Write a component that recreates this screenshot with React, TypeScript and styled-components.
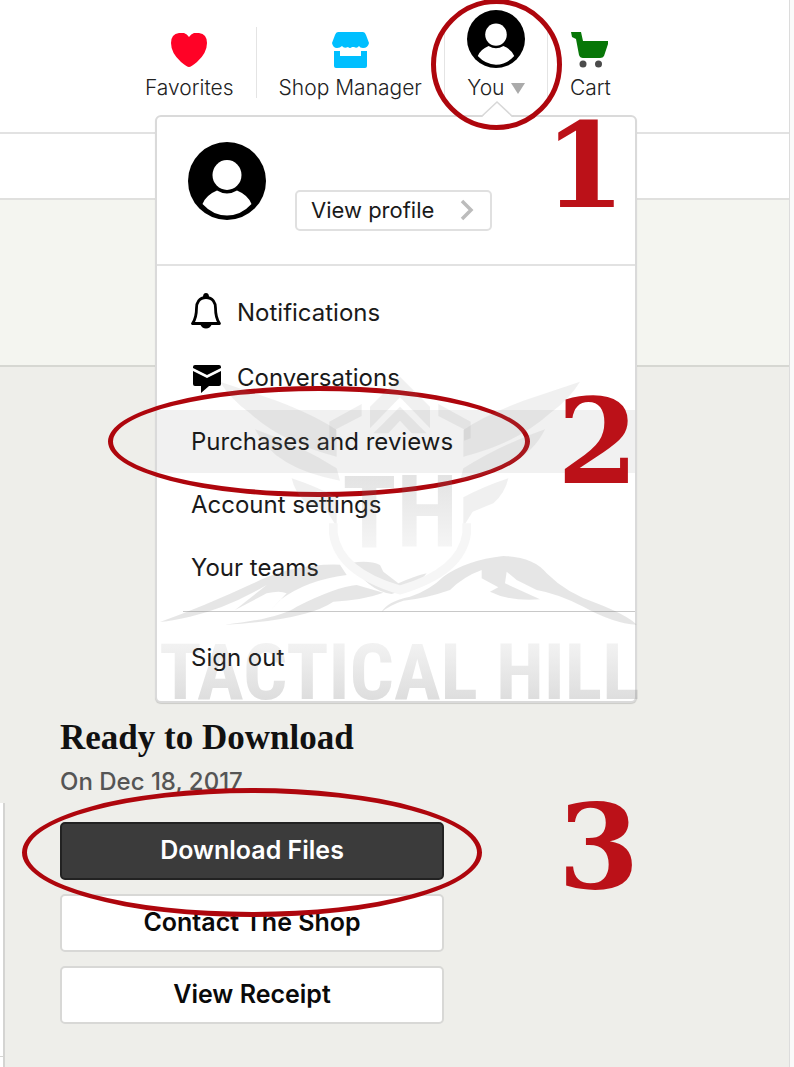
import React from "react";
import styled, { createGlobalStyle, css } from "styled-components";

const GlobalStyle = createGlobalStyle`
  * { box-sizing: border-box; }
  body {
    margin: 0;
    background: #fafafa;
    font-family: Inter, "Liberation Sans", sans-serif;
    color: #1a1a1a;
  }
  h2, p, ul { margin: 0; padding: 0; }
  a { color: inherit; text-decoration: none; }
`;

const Page = styled.div`
  position: relative;
  min-height: 100vh;
  margin-right: 4px;
  border-right: 1px solid #dcdcdc;
  display: flex;
  flex-direction: column;
  background: #fff;
  overflow: hidden;
`;

const Header = styled.header`
  height: 134px;
  border-bottom: 2px solid #e2e2e2;
  padding-top: 27px;
`;

const Nav = styled.nav`
  display: flex;
  padding-left: 123px;
`;

const NavItem = styled.a<{ $last?: boolean }>`
  display: flex;
  flex-direction: column;
  align-items: center;
  justify-content: flex-end;
  gap: 10px;
  height: 71px;
  padding: 0 22px;
  border-right: ${(p) => (p.$last ? "0" : "1px solid #e4e4e4")};
  font-size: 21px;
  font-weight: 300;
  line-height: 20px;
  color: #222;
  white-space: nowrap;
  svg { flex: none; }
`;

const NavLabel = styled.span`
  display: flex;
  align-items: center;
  gap: 6px;
`;

const SubBar = styled.div`
  height: 66px;
  border-bottom: 2px solid #e0e0de;
`;

const Banner = styled.div`
  height: 167px;
  background: #f4f5f0;
  border-bottom: 2px solid #d6d7d2;
`;

const Content = styled.main`
  flex: 1;
  display: flex;
  background: #eeeeea;
`;

const SideCard = styled.div`
  flex: none;
  width: 5px;
  margin-top: 436px;
  background: #fff;
  border-right: 2px solid #d4d4d2;
  display: flex;
  align-items: flex-end;
  &::after {
    content: "";
    width: 100%;
    height: 10px;
    border-top: 1px solid #d4d4d2;
  }
`;

const Order = styled.section`
  width: 384px;
  margin-left: 55px;
  padding: 349px 0 43px;
`;

const OrderTitle = styled.h2`
  font-family: "Liberation Serif", serif;
  font-size: 35px;
  line-height: 44px;
  font-weight: 700;
  color: #111;
  white-space: nowrap;
`;

const OrderDate = styled.p`
  margin: 6px 0 24px;
  font-size: 24px;
  line-height: 32px;
  font-weight: 500;
  color: #555;
`;

const Actions = styled.div`
  display: flex;
  flex-direction: column;
  gap: 14px;
`;

const Action = styled.button<{ $dark?: boolean }>`
  height: 58px;
  padding: 0 0 2px;
  border-radius: 5px;
  font: 600 25px Inter, "Liberation Sans", sans-serif;
  ${(p) =>
    p.$dark
      ? css`
          background: #3b3b3b;
          border: 2px solid #222;
          color: #fff;
        `
      : css`
          background: #fff;
          border: 2px solid #d8d8d6;
          color: #0a0a0a;
        `}
`;

const Menu = styled.div`
  position: absolute;
  top: 115px;
  left: 155px;
  width: 482px;
  background: #fff;
  border: 2px solid #dadada;
  border-radius: 6px;
  box-shadow: 0 1px 1px rgba(0, 0, 0, 0.15);
`;

const Notch = styled.svg`
  position: absolute;
  top: -17px;
  left: 322px;
`;

const Profile = styled.div`
  display: flex;
  align-items: flex-start;
  gap: 29px;
  height: 149px;
  padding: 25px 31px 0;
  border-bottom: 2px solid #e2e2e2;
`;

const ProfileButton = styled.button`
  display: flex;
  align-items: center;
  justify-content: space-between;
  width: 197px;
  height: 41px;
  margin-top: 48px;
  padding: 0 16px 2px 14px;
  background: #fff;
  border: 2px solid #e0e0e0;
  border-radius: 5px;
  font: 400 22px Inter, "Liberation Sans", sans-serif;
  color: #1a1a1a;
  white-space: nowrap;
`;

const MenuList = styled.ul<{ $ruled?: boolean }>`
  list-style: none;
  padding: 14px 0 12px;
  ${(p) =>
    p.$ruled &&
    css`
      margin-left: 26px;
      border-top: 1px solid #c8c8c8;
      a { padding-left: 8px; }
    `}
`;

const MenuLink = styled.a<{ $tall?: boolean; $active?: boolean }>`
  display: flex;
  align-items: center;
  gap: 14px;
  height: ${(p) => (p.$tall ? 65 : 63)}px;
  padding-left: 34px;
  background: ${(p) => (p.$active ? "#f1f1f1" : "transparent")};
  font-size: 24px;
`;

const Ring = styled.span<{ $x: number; $y: number; $w: number; $h: number }>`
  position: absolute;
  left: ${(p) => p.$x}px;
  top: ${(p) => p.$y}px;
  width: ${(p) => p.$w}px;
  height: ${(p) => p.$h}px;
  border: 5px solid #ae060d;
  border-radius: 50%;
  pointer-events: none;
`;

const StepNumber = styled.span<{ $x: number; $y: number }>`
  position: absolute;
  left: ${(p) => p.$x}px;
  top: ${(p) => p.$y}px;
  font: 700 117px/118px "DejaVu Serif", serif;
  color: #bb1118;
  pointer-events: none;
`;

const Watermark = styled.svg`
  position: absolute;
  left: 150px;
  top: 360px;
  pointer-events: none;
`;

const WatermarkText = styled.text`
  font-family: "Roboto Condensed", "Open Sans Condensed", Roboto, sans-serif;
  font-weight: 700;
`;

const Avatar = ({ size }: { size: number }) => (
  <svg width={size} height={size} viewBox="0 0 78 78" aria-hidden="true">
    <circle cx="39" cy="39" r="39" fill="#000" />
    <ellipse cx="39" cy="33" rx="14.5" ry="15" fill="#fff" />
    <path d="M29 48.500Q39 54.500 49 48.500Q60 53 63.500 62Q53 73.500 39 73.500T14.500 62Q18 53 29 48.500Z" fill="#fff" />
  </svg>
);

const HeartIcon = () => (
  <svg width="38" height="37" viewBox="0 0 38 37" aria-hidden="true">
    <path d="M19 36Q17 36 11 31Q1 22 1 12Q1 3 9 2H14Q17 3 19 6Q21 3 24 2H29Q37 3 37 12Q37 22 27 31Q21 36 19 36Z" fill="#ff0226" />
  </svg>
);

const ShopIcon = () => (
  <svg width="37" height="37" viewBox="0 0 37 37" aria-hidden="true">
    <path d="M6 1H31Q33 1 34 4L37 12Q36 17 31 17Q28 17 27 15Q25 18 22 16H20Q18 18 16 16Q12 18 10 15Q8 17 5 17Q1 17 0 12L3 4Q4 1 6 1Z" fill="#00bfff" />
    <path d="M2 20H8V25H29V20H35V35Q35 37 33 37H4Q2 37 2 35Z" fill="#00bfff" />
  </svg>
);

const CartIcon = () => (
  <svg width="38" height="37" viewBox="0 0 38 37" aria-hidden="true">
    <path d="M0 1H10L12 10H37V13L33 25Q32 27 29 27H12Q9 27 8 24L5 8L1 6Z" fill="#087708" />
    <circle cx="12" cy="33" r="3.500" fill="#4b4b4b" />
    <circle cx="27.500" cy="33" r="3.500" fill="#4b4b4b" />
  </svg>
);

const BellIcon = () => (
  <svg width="32" height="40" viewBox="0 0 32 40" aria-hidden="true">
    <path d="M15 4.500C8 4.500 5.500 10 5.500 15C5.500 23 4 27 1.500 30.500H28.500C26 27 24.500 23 24.500 15C24.500 10 22 4.500 15 4.500Z" fill="none" stroke="#000" strokeWidth="2.800" strokeLinejoin="round" />
    <path d="M12 4Q12 0 15 0T18 4V6H12ZM9 31H21Q19 35.500 15 35.500T9 31Z" fill="#000" />
  </svg>
);

const MessageIcon = () => (
  <svg width="32" height="30" viewBox="0 0 32 30" aria-hidden="true">
    <path d="M4 2H28Q30 2 30 4V5L16 12L2 5V4Q2 2 4 2Z" fill="#000" />
    <path d="M2 8L16 15L30 8V21Q30 23 28 23H18L10 30V23H4Q2 23 2 21Z" fill="#000" />
  </svg>
);

const ChevronIcon = () => (
  <svg width="14" height="22" viewBox="0 0 14 22" aria-hidden="true">
    <path d="M2 2L11 11L2 20" fill="none" stroke="#bcbcbc" strokeWidth="3.500" />
  </svg>
);

const Wings = () => (
  <g>
    <path d="M1290 65L1120 122Q1000 168 940 210V290Q1100 250 1200 160Q1260 115 1290 65Z" />
    <path d="M1185 208Q1050 255 940 325L930 362Q1130 325 1185 208Z" />
    <path d="M1075 355Q1000 380 940 412V500L968 455L1030 430Q1065 400 1075 355Z" />
    <path d="M865 132L962 185V235L942 242V208L865 168Z" />
  </g>
);

const TacticalHill = () => (
  <Watermark width="500" height="345" viewBox="0 0 1500 1035" aria-hidden="true">
    <defs>
      <linearGradient id="fadeDown" x1="0" y1="0" x2="0" y2="1">
        <stop offset="0.2" stopColor="#777" stopOpacity="0.2" />
        <stop offset="1" stopColor="#777" stopOpacity="0.03" />
      </linearGradient>
      <linearGradient id="fadeUp" x1="0" y1="0" x2="0" y2="1">
        <stop offset="0.2" stopColor="#777" stopOpacity="0.1" />
        <stop offset="0.85" stopColor="#777" stopOpacity="0.26" />
      </linearGradient>
    </defs>
    <g fill="#888" fillOpacity="0.13">
      <Wings />
      <g transform="matrix(-1 0 0 1 1500 0)">
        <Wings />
      </g>
      <path d="M750 50L840 140V205L750 112L660 205V140Z" />
      <path d="M750 140L830 220H785L750 182L715 220H670Z" />
    </g>
    <g fill="#777" fillOpacity="0.18">
      <path d="M30 786Q160 740 310 670Q430 610 570 614L590 645Q470 660 390 720L360 752L410 700Q390 690 350 700L255 750L350 675Q230 745 120 770Q70 782 30 786Z" />
      <path d="M605 608Q660 600 690 615L700 635L745 670Q790 650 830 640Q800 680 725 702Q650 690 605 608Z" />
      <path d="M225 794Q390 775 440 740Q560 680 620 675L700 698Q640 720 550 725Q470 780 225 794Z" />
      <path d="M695 756Q710 725 780 710Q840 690 880 650Q950 600 1060 588Q1150 590 1190 640Q1250 700 1340 730Q1430 765 1460 794Q1390 790 1300 740Q1220 700 1160 690L1100 660L1070 635L1065 670L1170 718Q1080 725 1020 695L1045 682L995 655V630Q940 650 900 690Q830 715 760 722Q720 735 695 756Z" />
    </g>
    <path d="M550 490V520Q566 636 750 690Q934 636 950 520V490" fill="none" stroke="#f6f6f6" strokeWidth="26" />
    <WatermarkText x="750" y="560" textAnchor="middle" fontSize="300" fill="url(#fadeDown)">TH</WatermarkText>
    <WatermarkText x="28" y="1018" fontSize="234" fill="url(#fadeUp)">TACTICAL HILL</WatermarkText>
  </Watermark>
);

export default function App() {
  return (
    <>
      <GlobalStyle />
      <Page>
        <Header>
          <Nav>
            <NavItem href="#favorites">
              <HeartIcon />
              <NavLabel>Favorites</NavLabel>
            </NavItem>
            <NavItem href="#shop">
              <ShopIcon />
              <NavLabel>Shop Manager</NavLabel>
            </NavItem>
            <NavItem href="#you">
              <Avatar size={58} />
              <NavLabel>
                You
                <svg width="14" height="11" viewBox="0 0 14 11" aria-hidden="true">
                  <path d="M0 0H14L7 11Z" fill="#aaa" />
                </svg>
              </NavLabel>
            </NavItem>
            <NavItem href="#cart" $last>
              <CartIcon />
              <NavLabel>Cart</NavLabel>
            </NavItem>
          </Nav>
        </Header>
        <SubBar />
        <Banner />
        <Content>
          <SideCard />
          <Order>
            <OrderTitle>Ready to Download</OrderTitle>
            <OrderDate>On Dec 18, 2017</OrderDate>
            <Actions>
              <Action $dark>Download Files</Action>
              <Action>Contact The Shop</Action>
              <Action>View Receipt</Action>
            </Actions>
          </Order>
        </Content>

        <Menu>
          <Notch width="36" height="18" viewBox="0 0 36 18" aria-hidden="true">
            <path d="M2 18L18 2L34 18Z" fill="#fff" />
            <path d="M1 16H3L18 2L33 16H35" fill="none" stroke="#d8d8d8" strokeWidth="1.500" />
          </Notch>
          <Profile>
            <Avatar size={78} />
            <ProfileButton>
              View profile
              <ChevronIcon />
            </ProfileButton>
          </Profile>
          <MenuList>
            <li><MenuLink href="#notifications" $tall><BellIcon />Notifications</MenuLink></li>
            <li><MenuLink href="#conversations" $tall><MessageIcon />Conversations</MenuLink></li>
            <li><MenuLink href="#purchases" $active>Purchases and reviews</MenuLink></li>
            <li><MenuLink href="#settings">Account settings</MenuLink></li>
            <li><MenuLink href="#teams">Your teams</MenuLink></li>
          </MenuList>
          <MenuList $ruled>
            <li><MenuLink href="#signout">Sign out</MenuLink></li>
          </MenuList>
        </Menu>

        <Ring $x={431} $y={-1} $w={131} $h={131} />
        <Ring $x={108} $y={386} $w={422} $h={111} />
        <Ring $x={22} $y={788} $w={460} $h={129} />
        <TacticalHill />
        <StepNumber $x={544} $y={107}>1</StepNumber>
        <StepNumber $x={557} $y={383}>2</StepNumber>
        <StepNumber $x={558} $y={788}>3</StepNumber>
      </Page>
    </>
  );
}
